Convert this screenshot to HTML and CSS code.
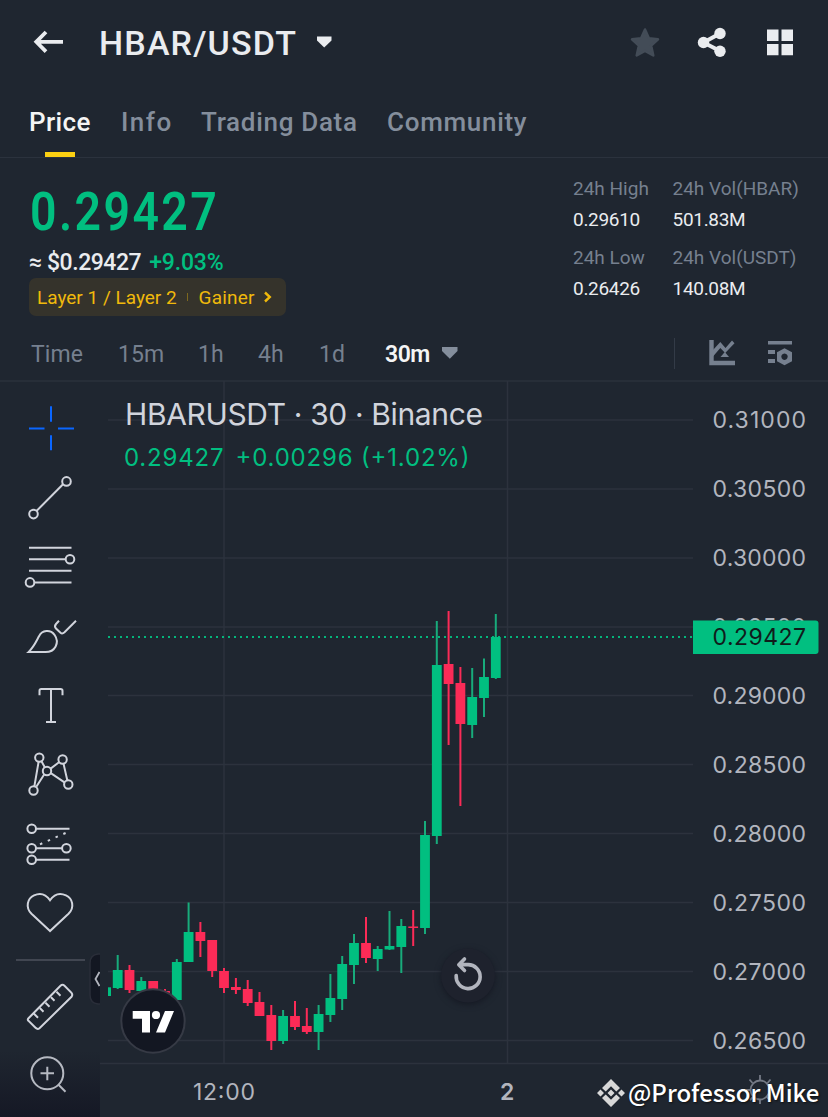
FILE: index.html
```html
<!DOCTYPE html>
<html lang="en">
<head>
<meta charset="utf-8">
<title>HBAR/USDT</title>
<link rel="stylesheet" href="styles.css">
</head>
<body>
<main class="app">
  <header class="topbar">
    <svg class="back" width="32" height="28" viewBox="32 28 32 28"><path d="M63 41.8H37M46 32L36.3 41.8L46 51.6" fill="none" stroke="#eaecef" stroke-width="3.8"/></svg>
    <h1 class="pair">HBAR/USDT</h1>
    <svg class="caret" width="18" height="14" viewBox="315 34.500 18 14"><path d="M317 36H331.500V40L324.200 47L317 40Z" fill="#eaecef"/></svg>
    <div class="actions">
      <svg width="32" height="32" viewBox="629 26 32 32"><path d="M645 29.500L648.900 38.300L658 39.300L651.200 45.700L653.300 55.500L645 51L636.700 55.500L638.800 45.700L632 39.300L641.100 38.300Z" fill="#434c57" stroke="#434c57" stroke-width="2.500" stroke-linejoin="round"/></svg>
      <svg width="32" height="32" viewBox="697 26 32 32"><path d="M720 33.500L703.500 42.500L720 51" fill="none" stroke="#eaecef" stroke-width="4"/><g fill="#eaecef"><circle cx="720" cy="33.500" r="5.700"/><circle cx="703.500" cy="42.500" r="5.700"/><circle cx="720" cy="51.300" r="5.700"/></g></svg>
      <svg width="32" height="32" viewBox="764 26 32 32"><path d="M767 29.500h11.500v11.500H767zM781.500 29.500H793v11.500h-11.500zM767 44h11.500v11.300H767zM781.500 44H793v11.300h-11.500z" fill="#eaecef"/></svg>
    </div>
  </header>

  <nav class="tabs">
    <a class="tab active t-price">Price</a>
    <a class="tab t-info">Info</a>
    <a class="tab t-data">Trading Data</a>
    <a class="tab t-comm">Community</a>
  </nav>

  <section class="summary">
    <div class="quote">
      <div class="price">0.29427</div>
      <div class="sub"><span>≈ $0.29427</span><span class="up">+9.03%</span></div>
      <div class="tags">
        <span class="tag-a">Layer 1 / Layer 2</span><i></i><span class="tag-b">Gainer</span>
        <svg width="10" height="12" viewBox="0 0 10 12"><path d="M2 1.500L6.800 6L2 10.500" fill="none" stroke="#f0b90b" stroke-width="2.400"/></svg>
      </div>
    </div>
    <dl class="stats">
      <div><dt>24h High</dt><dd>0.29610</dd></div>
      <div><dt>24h Vol(HBAR)</dt><dd>501.83M</dd></div>
      <div><dt>24h Low</dt><dd>0.26426</dd></div>
      <div><dt>24h Vol(USDT)</dt><dd>140.08M</dd></div>
    </dl>
  </section>

  <div class="intervals">
    <span class="iv w-time">Time</span>
    <span class="iv w-15">15m</span>
    <span class="iv w-1h">1h</span>
    <span class="iv w-4h">4h</span>
    <span class="iv w-1d">1d</span>
    <span class="iv on">30m</span>
    <svg class="iv-caret" width="18" height="14" viewBox="441 346 18 14"><path d="M442 347H457.500V351L449.800 358.700L442 351Z" fill="#848e9c"/></svg>
    <div class="chart-tools">
      <svg width="30" height="30" viewBox="707 338 30 30"><path d="M711.500 340V363H735" fill="none" stroke="#76808f" stroke-width="4.400"/><path d="M713 350L720.300 342L725.500 348L732 340.500L734.500 343.200L725.200 353L720.300 348L713 356.500Z" fill="#76808f"/><path d="M724.800 352L729 357H720.500Z" fill="#76808f"/></svg>
      <svg width="30" height="30" viewBox="765 338 30 30"><g fill="#76808f"><path d="M768 341H792V344.600H768zM768 350H775V354H768zM768 359H775V363H768z"/><path fill-rule="evenodd" d="M784.500 348.300L792 352.300V361.200L784.500 365.200L777 361.200V352.300ZM784.500 353.500a3.200 3.200 0 1 0 .01 0Z"/></g></svg>
    </div>
  </div>

  <section class="workspace">
    <aside class="toolbar">
      <svg viewBox="24 402 54 54"><path d="M51 406.500V422M51 435.500V450.500M29 428.700H44.500M58 428.700H74" stroke="#0a66ff" stroke-width="2"/></svg>
      <svg viewBox="24 470 54 54"><path d="M36.700 510L63 483.500"/><circle cx="33.500" cy="513.300" r="4.300"/><circle cx="66.500" cy="480.600" r="4.300"/></svg>
      <svg viewBox="24 540 54 54"><path d="M29 548H71.500M29 559.500H65.500M29 571H71.500M34.500 582.600H71.500"/><circle cx="70" cy="559.500" r="4.300"/><circle cx="30" cy="582.600" r="4.300"/></svg>
      <svg viewBox="24 610 54 54"><path d="M28.500 652.300C34 647 36.500 641 39 636.500C42 630 50.500 629.500 54.500 635C60 643 55 652.300 45.500 652.300ZM59 621L56 624.200Q54 626.500 56 628.800L60.500 633Q62.300 634.500 64.500 632.500L76 621"/></svg>
      <svg viewBox="24 678 54 54"><path d="M39.500 694.500V690Q39.500 688.300 41.300 688.300H60.500Q62.500 688.300 62.500 690V694.500M51 688.300V721M46 721.300H56"/></svg>
      <svg viewBox="24 748 54 54"><path d="M34.400 786.400L38.600 762M41.500 761.500L44.800 767.500M36.300 787L44.300 774.500M50.600 768.800L59 762.500M63.500 763.800L67.300 780.500M50.800 773.300L64.500 782.500"/><circle cx="33.500" cy="790.700" r="4.200"/><circle cx="39.300" cy="757.800" r="4.200"/><circle cx="47" cy="771.200" r="4.200"/><circle cx="62.600" cy="759.700" r="4.200"/><circle cx="68.300" cy="784.700" r="4.200"/></svg>
      <svg viewBox="24 817 54 54"><path d="M36 829H69.500M36 848.500H62M36 860H69.500"/><path d="M40 844.500L66 833" stroke-dasharray="2.500 6"/><circle cx="31.700" cy="829" r="4.300"/><circle cx="31.700" cy="848.500" r="4.300"/><circle cx="31.700" cy="860" r="4.300"/><circle cx="66.400" cy="848.500" r="4.300"/></svg>
      <svg viewBox="24 886 54 54"><path d="M50 931.300L31.500 914C25 907.500 27.500 898.500 34 895.500C40 892.800 46 894.500 50 900.500C54 894.500 60 892.800 66 895.500C72.500 898.500 75 907.500 68.500 914Z"/></svg>
      <hr>
      <svg class="ruler" viewBox="24 980 54 54"><path d="M28.500 1018.500L60.500 986Q62.500 984 64.500 986L71.500 993Q73 995 71.500 997L39.500 1028.500Q37.500 1030 35.500 1028L28.500 1021Q27 1020 28.500 1018.500ZM34 1014L38 1018M40 1008.500L43.500 1012M45.500 1003L49.500 1007M51 997.500L54.500 1001M56.500 992L60.500 996"/></svg>
      <svg class="zoom" viewBox="24 1048 54 54"><circle cx="47.300" cy="1073.500" r="16"/><path d="M58.500 1085L65.500 1092M47.300 1067V1080.500M40.500 1073.500H54"/></svg>
    </aside>

    <div class="plot">
      <svg class="chart" width="728" height="736" viewBox="100 381 728 736">
        <path d="M108 420H693M108 489H693M108 558H693M108 627H693M108 695.500H693M108 764.500H693M108 833.500H693M108 902.500H693M108 971.500H693M108 1040.500H693M100 1063.500H828M224 381V1063M507.500 381V1063" stroke="#2c323d" stroke-width="1.500" fill="none"/>
        <path d="M108 637H693" stroke="#04b57b" stroke-width="2" stroke-dasharray="2 4"/>
        <g fill="none">
          <path stroke="#18ab7b" stroke-width="2" d="M117.700 955V989M141.300 977V991M176.800 959V1001M188.600 902.500V962M283.100 1010V1044M318.600 1005V1050M330.400 974V1022M342.200 956V1010M354 934V984M377.700 946V971M389.500 911V950M401.300 919V973M425 821V934M436.800 621V844M472.200 668V738M484 658.500V717M495.800 614V679"/>
          <path stroke="#01bf80" stroke-width="9.800" d="M117.700 970V988M141.300 981V991M176.800 962V1000M188.600 932V962M283.100 1016V1041M318.600 1014V1032M330.400 998V1015M342.200 964V999M354 943V965M377.700 949V959M389.500 946V949.500M401.300 926V947M425 835V928M436.800 665V836M472.200 697V725M484 677V698M495.800 637V678"/>
          <path stroke="#01bf80" stroke-width="3" d="M109.500 987.300V996"/>
          <path stroke="#fb2b57" stroke-width="2" d="M129.500 965V993M165 989V996M200.400 922V957M212.200 940V977M224 968V993M235.900 978V994M247.700 980V1006M259.500 992V1016M271.300 1005V1050M295 1001V1030M306.800 1008V1034M366 917V963M413.200 910V946M448.600 611V745M460.400 667V806"/>
          <path stroke="#fb2b57" stroke-width="9.800" d="M129.500 970V990M153.200 981V992M165 991V997M200.400 932V941M212.200 940V971M224 971V988M235.900 987V990M247.700 989V1003M259.500 1002V1016M271.300 1015V1041M295 1016V1027M306.800 1026V1032M366 943V958M413.200 926.500V928M448.600 664V684M460.400 683V724"/>
        </g>
        <g class="axis">
          <text x="712.500" y="428" textLength="93.500">0.31000</text>
          <text x="712.500" y="497" textLength="93.500">0.30500</text>
          <text x="712.500" y="566" textLength="93.500">0.30000</text>
          <text x="712.500" y="635" textLength="93.500">0.29500</text>
          <text x="712.500" y="704" textLength="93.500">0.29000</text>
          <text x="712.500" y="772.500" textLength="93.500">0.28500</text>
          <text x="712.500" y="841.500" textLength="93.500">0.28000</text>
          <text x="712.500" y="910.500" textLength="93.500">0.27500</text>
          <text x="712.500" y="979.500" textLength="93.500">0.27000</text>
          <text x="712.500" y="1048.500" textLength="93.500">0.26500</text>
          <text x="193" y="1100" textLength="62">12:00</text>
          <text x="500" y="1100" class="strong">2</text>
        </g>
        <path d="M693 620.500H815.500Q818.500 620.500 818.500 623.500V651Q818.500 654 815.500 654H693Z" fill="#01bf80"/>
        <text class="last" x="712.500" y="645" textLength="93.500">0.29427</text>
        <text class="symbol" x="125" y="425" textLength="358">HBARUSDT · 30 · Binance</text>
        <text class="change" x="124" y="466" textLength="99.500">0.29427</text>
        <text class="change" x="235.500" y="466" textLength="234">+0.00296 (+1.02%)</text>
        <circle cx="153" cy="1021" r="31.700" fill="#131722" stroke="#363a45" stroke-width="2"/>
        <path d="M132.700 1011H150V1032.500H142V1018.800H132.700ZM165 1011H174L165 1032.500H156Z" fill="#fff"/><circle cx="156" cy="1015" r="4.100" fill="#fff"/>
        <g class="reset"><circle cx="468" cy="975.500" r="27" fill="#1e222d"/><path d="M456.200 975.500A12 12 0 1 0 468 964.600H459M464.500 959L458.800 964.800L464.500 970.500" fill="none" stroke="#b2b5be" stroke-width="3.600" stroke-linecap="round" stroke-linejoin="round"/></g>
        <g fill="none" stroke="#747a86" stroke-width="1.800"><circle cx="760" cy="1090" r="9.500"/><path d="M760 1075V1080M760 1100V1104M770.500 1079.500L767.500 1083M749.500 1079.500L752.500 1083M746 1090H750M770 1090H774M750 1100L753 1097M770 1100L767 1097"/></g>
      </svg>
      <div class="watermark">
        <svg width="28" height="28" viewBox="597 1079 28 28"><g fill="#d8d8d8"><path d="M611 1079L620 1088L616.300 1091.500L611 1086.300L605.700 1091.500L602 1088ZM611 1107L620 1098L616.300 1094.500L611 1099.700L605.700 1094.500L602 1098ZM611 1089.500L614.500 1093L611 1096.500L607.500 1093ZM600.500 1089.500L604 1093L600.500 1096.500L597 1093ZM621.500 1089.500L625 1093L621.500 1096.500L618 1093Z"/></g></svg>
        <span>@Professor Mike</span>
      </div>
    </div>
    <svg class="handle" width="11" height="52" viewBox="0 0 11 52"><path d="M12 1H9Q1 2 1 10V42Q1 50 9 51H12" fill="#131722" stroke="#2a2e39" stroke-width="1.500"/><path d="M10.500 19L6.500 26L10.500 33" fill="none" stroke="#b2b5be" stroke-width="1.800"/></svg>
  </section>
</main>
</body>
</html>
```
FILE: styles.css
```css
* { box-sizing: border-box; }
body { margin: 0; background: #1f2630; font-family: Roboto, "Liberation Sans", sans-serif; color: #eaecef; }
.app { width: 828px; height: 1117px; display: flex; flex-direction: column; overflow: hidden; }
svg { display: block; flex: none; }
span, a, dt, dd, h1 { white-space: nowrap; }

.topbar { height: 86px; display: flex; align-items: center; padding: 0 32px 2px; }
.pair { margin: 0 0 0 35px; width: 216px; font-size: 34px; line-height: 40px; font-weight: 500; letter-spacing: 1.15px; padding-top: 1px; }
.actions { margin-left: auto; display: flex; gap: 35.500px; }

.tabs { height: 72px; display: flex; padding-left: 29px; border-bottom: 1px solid #2b323d; }
.tab { height: 71px; padding-top: 19px; font-size: 26px; line-height: 34px; font-weight: 500; color: #848e9c; letter-spacing: .7px; position: relative; }
.t-price { width: 92px; letter-spacing: .4px; }
.t-info { width: 80px; letter-spacing: 1.500px; }
.t-data { width: 186px; }
.active { color: #f5f5f5; }
.active::after { content: ""; position: absolute; left: 16px; bottom: 0; width: 30px; height: 5px; background: #fcd012; }

.summary { height: 167px; display: flex; justify-content: space-between; }
.quote { padding: 23px 0 0 29px; }
.price { height: 62px; font-size: 54px; line-height: 62px; font-weight: 600; color: #01bf80; letter-spacing: 2.800px; transform: translateX(1px) scaleX(.86); transform-origin: 0 0; }
.sub { height: 35px; display: flex; gap: 8px; padding-top: 6px; font-size: 23px; line-height: 28px; font-weight: 500; letter-spacing: -.45px; }
.up { color: #01bf80; letter-spacing: -.2px; }
.tags { width: 257px; height: 38px; display: flex; align-items: center; border-radius: 7px; padding-left: 8px; background: #35332b; color: #f0b90b; font-size: 19px; letter-spacing: 0; }
.tag-a { width: 150px; }
.tags i { width: 1px; height: 8px; background: #7d681f; }
.tag-b { width: 64px; margin-left: 10.500px; letter-spacing: .2px; }
.stats { margin: 0; width: 255px; padding-top: 18px; display: grid; grid-template-columns: 99.500px 1fr; grid-auto-rows: 69px; font-size: 19px; }
.stats dt { color: #76808f; line-height: 26px; letter-spacing: 0; }
.stats dd { margin: 5px 0 0; line-height: 26px; letter-spacing: -.3px; }

.intervals { height: 57px; display: flex; align-items: center; border-bottom: 2px solid #272e38; padding: 1px 33px 0 31px; color: #76808f; font-size: 23px; letter-spacing: .1px; }
.iv { padding-top: 2px; }
.w-time { width: 87px; }
.w-15 { width: 80px; }
.w-1h { width: 60px; }
.w-4h { width: 61px; }
.w-1d { width: 66px; }
.on { width: 56px; color: #f5f5f5; font-weight: 600; letter-spacing: -.5px; }
.chart-tools { margin-left: auto; height: 31px; display: flex; gap: 28px; padding-left: 32px; border-left: 1px solid #333b47; }

.workspace { height: 736px; margin-top: -1px; display: flex; flex: none; position: relative; }
.toolbar { width: 100px; padding: 13px 0 0 24px; background: linear-gradient(#1f263000 0 91%, #151825 100%); }
.toolbar svg { width: 54px; height: 54px; margin: 0 0 15.200px; fill: none; stroke: #d1d4dc; stroke-width: 2; transform: translateY(7.800px); }
.toolbar hr { margin: 27px 0 11px -8px; width: 69px; height: 2px; border: 0; background: #414651; }
.toolbar .ruler { margin-bottom: 14px; }
.toolbar .zoom { margin-bottom: 0; opacity: .85; }
.plot { width: 728px; position: relative; }
.chart { font-family: Inter, "Liberation Sans", sans-serif; }
.axis { font-size: 23px; fill: #b2b5be; }
.strong { font-weight: 600; }
.last { font-size: 23px; fill: #101c1b; }
.symbol { font-size: 30px; fill: #d1d4dc; }
.change { font-size: 24px; fill: #01bf80; }
.reset { filter: drop-shadow(0 2px 3px #151923); }
.watermark { position: absolute; left: 497px; top: 692px; display: flex; align-items: center; gap: 3px; height: 40px; color: #fff; font: 500 24px/38px "Noto Sans CJK SC", "Noto Sans", sans-serif; text-shadow: 1px 1px 2px #111; }
.watermark span { height: 40px; }
.handle { position: absolute; left: 89px; top: 572px; }
```
